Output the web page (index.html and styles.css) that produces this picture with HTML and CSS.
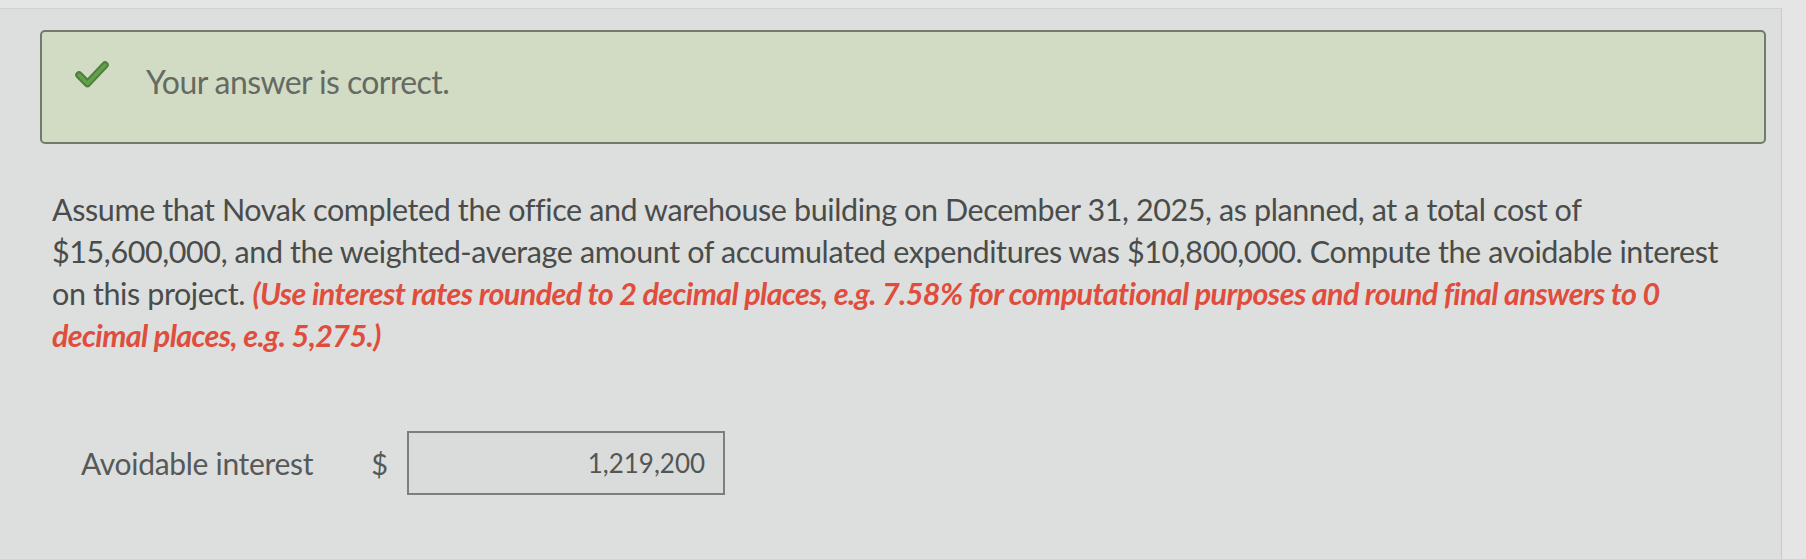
FILE: index.html
```html
<!DOCTYPE html>
<html lang="en">
<head>
<meta charset="utf-8">
<title>Avoidable interest</title>
<link rel="stylesheet" href="styles.css">
</head>
<body>
<div class="page">
  <div class="panel">
    <div class="feedback">
      <svg class="check" width="34" height="28" viewBox="0 0 34 28" aria-hidden="true">
        <path d="M4 15 L12.5 23.5 L30 5" fill="none" stroke="#4d7f3d" stroke-width="7.5" stroke-linecap="round" stroke-linejoin="round"/>
        <path d="M4 15 L12.5 23.5 L30 5" fill="none" stroke="#63a04c" stroke-width="3.5" stroke-linecap="round" stroke-linejoin="round"/>
      </svg>
      <span class="feedback-text">Your answer is correct.</span>
    </div>
    <p class="question">Assume that Novak completed the office and warehouse building on December 31, 2025, as planned, at a total cost of $15,600,000, and the weighted-average amount of accumulated expenditures was $10,800,000. Compute the avoidable interest on this project. <span class="hint">(Use interest rates rounded to 2 decimal places, e.g. 7.58% for computational purposes and round final answers to 0 decimal places, e.g. 5,275.)</span></p>
    <div class="answer-row">
      <span class="label">Avoidable interest</span>
      <span class="currency">$</span>
      <div class="input">1,219,200</div>
    </div>
  </div>
</div>
</body>
</html>
```

FILE: styles.css
```css
html, body {
  margin: 0;
  padding: 0;
}
body {
  background: #e4e5e4;
  font-family: Lato, "Open Sans", sans-serif;
  width: 1806px;
  height: 559px;
  overflow: hidden;
}
.page {
  display: flex;
  height: 559px;
}
.panel {
  width: 1782px;
  height: 559px;
  box-sizing: border-box;
  background: #dcdfdd;
  border-right: 1px solid #c9cbc9;
  border-top: 1px solid #d0d2d0;
  margin-top: 8px;
  padding-top: 21px;
}
.feedback {
  margin-left: 40px;
  width: 1726px;
  height: 114px;
  box-sizing: border-box;
  background: #d2dcc5;
  border: 2px solid #717b6c;
  border-radius: 5px;
  display: flex;
  align-items: center;
  padding-left: 33px;
  padding-bottom: 12px;
}
.check {
  display: block;
  flex: none;
  margin-bottom: 14px;
}
.feedback-text {
  margin-left: 37px;
  font-size: 32px;
  letter-spacing: -0.6px;
  color: #656a62;
}
.question {
  margin: 44px 0 0 52px;
  width: 1686px;
  font-size: 30.5px;
  letter-spacing: -0.4px;
  line-height: 42px;
  color: #4a4c4b;
}
.hint {
  color: #e04d3d;
  font-style: italic;
  font-weight: 700;
  letter-spacing: -0.6px;
}
.answer-row {
  display: flex;
  align-items: center;
  margin: 75px 0 0 81px;
}
.label {
  font-size: 30px;
  letter-spacing: -0.3px;
  color: #565958;
}
.currency {
  margin-left: 58px;
  font-size: 29px;
  color: #565958;
}
.input {
  margin-left: 19px;
  width: 318px;
  height: 64px;
  box-sizing: border-box;
  border: 2px solid #7c7f7d;
  background: #d9dcda;
  display: flex;
  align-items: center;
  justify-content: flex-end;
  padding-right: 18px;
  font-size: 26px;
  color: #535655;
}
```
